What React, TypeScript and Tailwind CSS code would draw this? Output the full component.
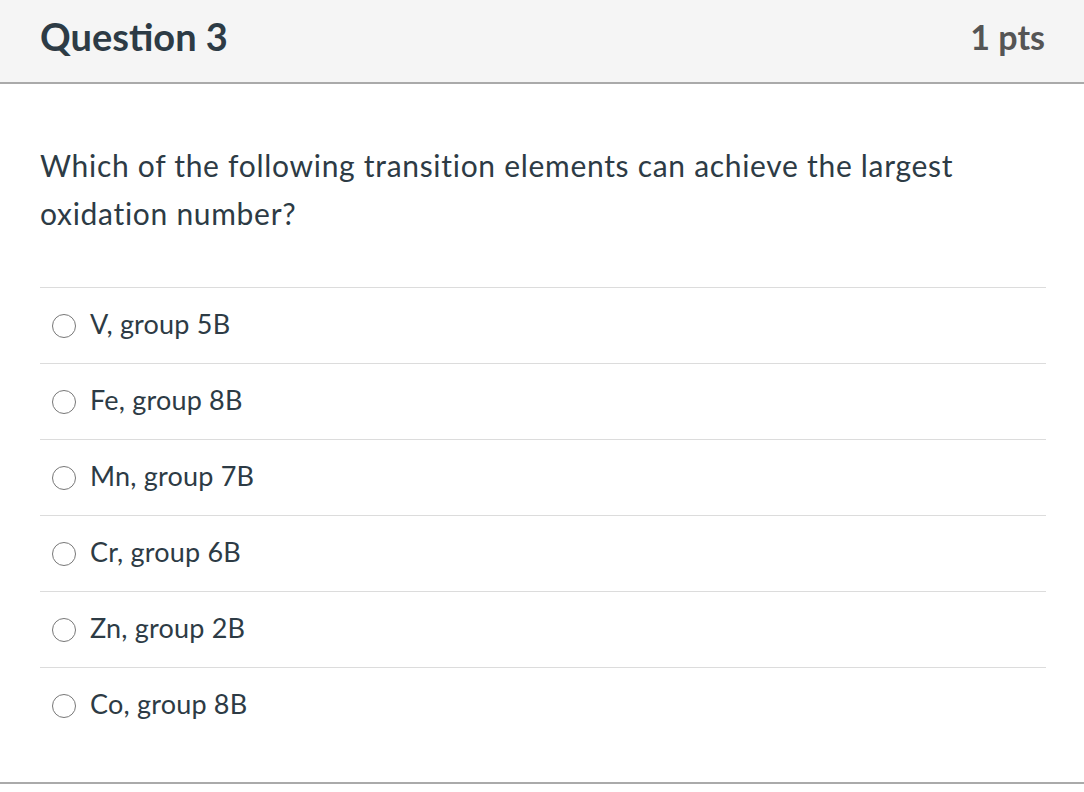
const answers = [
  "V, group 5B",
  "Fe, group 8B",
  "Mn, group 7B",
  "Cr, group 6B",
  "Zn, group 2B",
  "Co, group 8B",
];

function Answer({ label }: { label: string }) {
  return (
    <label className="flex h-[76px] items-center gap-[14px] border-t border-[#dcdcdc] pb-[3px] pl-[12px]">
      <span className="mt-[3px] h-[24px] w-[24px] shrink-0 rounded-full border-[1.5px] border-[#777]" />
      <span className="text-[27px] tracking-[0.2px] text-[#2d3b45]">{label}</span>
    </label>
  );
}

export default function App() {
  return (
    <div className="min-h-screen bg-white font-['Lato',sans-serif]">
      <div className="border-b-2 border-[#aaaaaa]">
        <header className="flex h-[84px] items-center justify-between border-b-2 border-[#aaaaaa] bg-[#f5f5f5] pb-[10px] pl-[40px] pr-[39px]">
          <h2 className="text-[38px] font-bold text-[#2d3b45]">Question 3</h2>
          <span className="text-[34px] font-bold text-[#555]">1 pts</span>
        </header>
        <div className="pb-[39px] pl-[40px] pr-[38px] pt-[57px]">
          <p className="text-[30px] leading-[48px] tracking-[0.7px] text-[#2d3b45]">
            Which of the following transition elements can achieve the largest
            <br />
            oxidation number?
          </p>
          <div className="mt-[50px]">
            {answers.map((a) => (
              <Answer key={a} label={a} />
            ))}
          </div>
        </div>
      </div>
    </div>
  );
}
